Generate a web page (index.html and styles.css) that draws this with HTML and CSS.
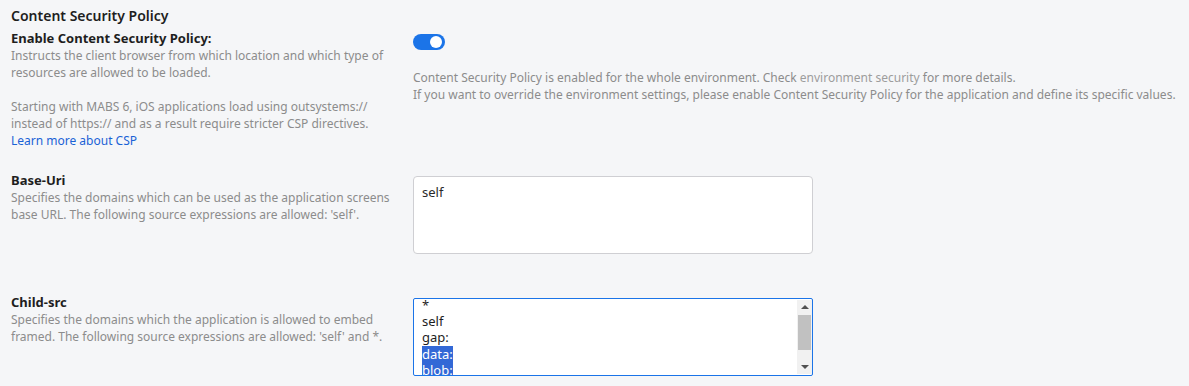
FILE: index.html
```html
<!DOCTYPE html>
<html>
<head>
<meta charset="utf-8">
<link rel="stylesheet" href="styles.css">
</head>
<body>
<div class="page">
  <h2 class="title">Content Security Policy</h2>

  <div class="row row-enable">
    <div class="info">
      <div class="label">Enable Content Security Policy:</div>
      <div class="desc">Instructs the client browser from which location and which type of resources are allowed to be loaded.<br><br>Starting with MABS 6, iOS applications load using outsystems:// instead of https:// and as a result require stricter CSP directives.<br><a class="link" href="#">Learn more about CSP</a></div>
    </div>
    <div class="control">
      <span class="toggle"><span class="knob"></span></span>
      <p class="note">Content Security Policy is enabled for the whole environment. Check <a class="muted-link" href="#">environment security</a> for more details.<br>If you want to override the environment settings, please enable Content Security Policy for the application and define its specific values.</p>
    </div>
  </div>

  <div class="row row-base">
    <div class="info">
      <div class="label">Base-Uri</div>
      <div class="desc">Specifies the domains which can be used as the application screens base URL. The following source expressions are allowed: 'self'.</div>
    </div>
    <div class="control">
      <div class="textbox">self</div>
    </div>
  </div>

  <div class="row row-child">
    <div class="info">
      <div class="label">Child-src</div>
      <div class="desc">Specifies the domains which the application is allowed to embed framed. The following source expressions are allowed: 'self' and *.</div>
    </div>
    <div class="control">
      <div class="textbox focused">
        <div class="lines">
          <div class="line">*</div>
          <div class="line">self</div>
          <div class="line">gap:</div>
          <div class="line"><span class="sel">data:</span></div>
          <div class="line"><span class="sel">blob:</span></div>
        </div>
        <div class="scrollbar">
          <span class="arrow up"></span>
          <span class="track"><span class="thumb"></span></span>
          <span class="arrow down"></span>
        </div>
      </div>
    </div>
  </div>
</div>
</body>
</html>
```

FILE: styles.css
```css
html, body {
  margin: 0;
  padding: 0;
  background: #f5f6f8;
}
body {
  font-family: "Noto Sans", "Open Sans", sans-serif;
  color: #222;
}
.page {
  padding: 6px 11px 0 11px;
}
.title {
  margin: 0;
  font-size: 14px;
  line-height: 20px;
  font-weight: 600;
  color: #1e1e1e;
}
.row {
  display: grid;
  grid-template-columns: 402px 1fr;
}
.row-enable { margin-top: 3px; }
.row-base { margin-top: 22px; }
.row-child { margin-top: 39px; }
.info {
  padding-right: 10px;
}
.label {
  font-size: 13px;
  line-height: 18px;
  font-weight: 700;
  color: #1e1e1e;
}
.desc {
  font-size: 12px;
  line-height: 17px;
  color: #8c8c8c;
}
.link {
  color: #1a62d6;
  text-decoration: none;
}
.control {
  padding-top: 5px;
}
.toggle {
  display: flex;
  justify-content: flex-end;
  align-items: center;
  width: 32px;
  height: 16px;
  box-sizing: border-box;
  padding: 0 3px;
  border-radius: 8px;
  background: #1b74e8;
}
.knob {
  width: 12px;
  height: 12px;
  border-radius: 50%;
  background: #fff;
}
.note {
  margin: 19px 0 0 0;
  font-size: 12px;
  line-height: 17px;
  color: #8c8c8c;
}
.muted-link {
  color: #9d9d9d;
  text-decoration: none;
}
.textbox {
  box-sizing: border-box;
  width: 400px;
  height: 78px;
  background: #fff;
  border: 1px solid #cfcfd3;
  border-radius: 4px;
  padding: 7px 8px;
  font-size: 13px;
  line-height: 17px;
  color: #2a2a2a;
}
.textbox.focused {
  border-color: #1b74e8;
  border-radius: 2px;
  padding: 0 0 0 8px;
  display: flex;
  overflow: hidden;
}
.lines {
  flex: 1;
  margin-top: -2px;
  line-height: 16.2px;
  color: #1e1e1e;
}
.line {
  height: 16.2px;
}
.sel {
  display: inline-block;
  background: #3368d6;
  color: #fff;
  line-height: 16.2px;
  height: 16.2px;
}
.scrollbar {
  width: 15px;
  background: #f1f1f1;
  display: flex;
  flex-direction: column;
  align-items: center;
  margin: 1px 0;
}
.arrow {
  display: block;
  width: 0;
  height: 0;
  margin: 5px 0;
  border-left: 4px solid transparent;
  border-right: 4px solid transparent;
}
.arrow.up { border-bottom: 4px solid #505050; }
.arrow.down { border-top: 4px solid #505050; }
.track {
  flex: 1;
  width: 100%;
  display: flex;
  justify-content: center;
}
.thumb {
  width: 13px;
  height: 35px;
  background: #c1c1c1;
  margin-top: 1px;
}
```
